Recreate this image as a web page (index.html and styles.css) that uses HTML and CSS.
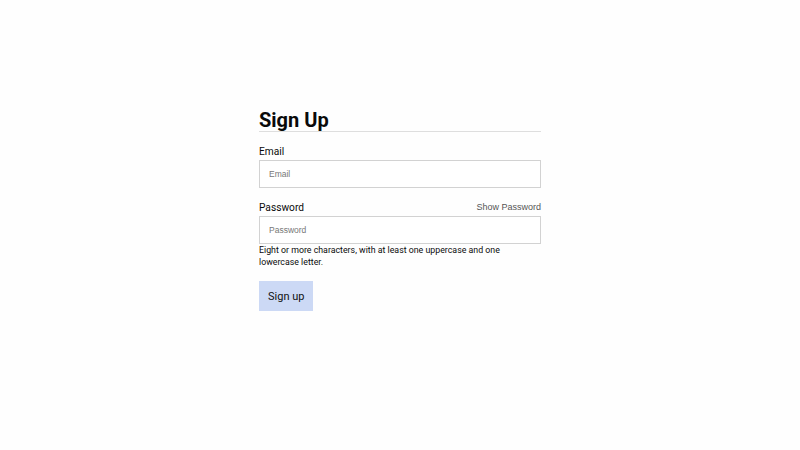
FILE: index.html
```html
<!DOCTYPE html>
<html lang="en">
<head>
<meta charset="utf-8">
<title>Sign Up</title>
<link rel="stylesheet" href="styles.css">
</head>
<body>
<main class="page">
  <form class="signup">
    <h1 class="title">Sign Up</h1>
    <div class="field">
      <label class="label" for="email">Email</label>
      <input class="input" id="email" type="email" placeholder="Email">
    </div>
    <div class="field">
      <div class="label-row">
        <label class="label" for="password">Password</label>
        <button type="button" class="toggle">Show Password</button>
      </div>
      <input class="input" id="password" type="password" placeholder="Password">
      <p class="hint">Eight or more characters, with at least one uppercase and one lowercase letter.</p>
    </div>
    <button type="submit" class="submit">Sign up</button>
  </form>
</main>
</body>
</html>
```

FILE: styles.css
```css
html, body {
  margin: 0;
  padding: 0;
  background: #fefefe;
}
body {
  font-family: Roboto, "Liberation Sans", sans-serif;
  color: #111;
}
.page {
  display: flex;
  justify-content: center;
  padding-top: 110px;
}
.signup {
  width: 282px;
  display: flex;
  flex-direction: column;
}
.title {
  margin: 0;
  font-size: 20px;
  font-weight: 700;
  line-height: 21px;
  border-bottom: 1px solid #dedede;
  color: #0a0a0a;
}
.field {
  display: flex;
  flex-direction: column;
}
.label-row {
  display: flex;
  justify-content: space-between;
  align-items: flex-end;
}
.label {
  font-size: 10.2px;
  line-height: 12px;
  margin-top: 14px;
  margin-bottom: 2px;
  color: #0a0a0a;
}
.toggle {
  border: none;
  background: none;
  padding: 0;
  margin: 0 0 3px;
  font-family: "Liberation Sans", Arial, sans-serif;
  font-size: 9px;
  line-height: 11px;
  color: #555;
}
.input {
  box-sizing: border-box;
  height: 28px;
  width: 100%;
  margin: 0;
  border: 1px solid #d2d2d2;
  padding: 0 9px;
  font-family: "Liberation Sans", Arial, sans-serif;
  font-size: 8.5px;
  background: #fff;
}
.input::placeholder {
  color: #777;
}
.hint {
  margin: 0;
  font-size: 8.8px;
  line-height: 12px;
  color: #0a0a0a;
}
.submit {
  align-self: flex-start;
  margin-top: 13px;
  height: 30px;
  padding: 0 9px;
  border: none;
  background: #ccd9f5;
  font-family: Roboto, "Liberation Sans", sans-serif;
  font-size: 11px;
  color: #111;
}
```
